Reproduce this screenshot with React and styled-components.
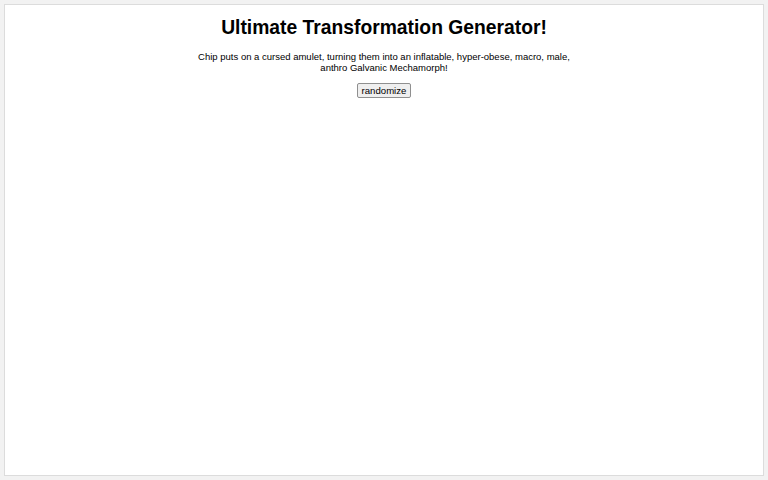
import React, { useState } from "react";
import styled, { createGlobalStyle } from "styled-components";

const GlobalStyle = createGlobalStyle`
  html, body {
    margin: 0;
    padding: 0;
    height: 100%;
    background: #f2f2f2;
    font-family: "Liberation Sans", Arial, sans-serif;
  }
  #root {
    height: 100%;
  }
`;

const Page = styled.div`
  box-sizing: border-box;
  height: 480px;
  padding: 4px;
`;

const Panel = styled.main`
  box-sizing: border-box;
  height: 100%;
  background: #fff;
  border: 1px solid #dcdcdc;
  display: flex;
  flex-direction: column;
  align-items: center;
  padding-top: 12px;
`;

const Title = styled.h1`
  margin: 0;
  font-size: 19.3px;
  font-weight: bold;
  color: #000;
  line-height: 22px;
`;

const Result = styled.p`
  margin: 12px 0 0;
  max-width: 380px;
  text-align: center;
  font-size: 9.5px;
  line-height: 11px;
  color: #000;
`;

const Button = styled.button`
  margin-top: 10px;
  font-family: "Liberation Sans", Arial, sans-serif;
  font-size: 9.6px;
  padding: 1px 4px;
  color: #000;
  background: #efefef;
  border: 1px solid #8f8f8f;
  border-radius: 2px;
  cursor: pointer;
`;

const App = () => {
  const [text] = useState(
    "Chip puts on a cursed amulet, turning them into an inflatable, hyper-obese, macro, male, anthro Galvanic Mechamorph!"
  );

  return (
    <>
      <GlobalStyle />
      <Page>
        <Panel>
          <Title>Ultimate Transformation Generator!</Title>
          <Result>{text}</Result>
          <Button>randomize</Button>
        </Panel>
      </Page>
    </>
  );
};

export default App;
